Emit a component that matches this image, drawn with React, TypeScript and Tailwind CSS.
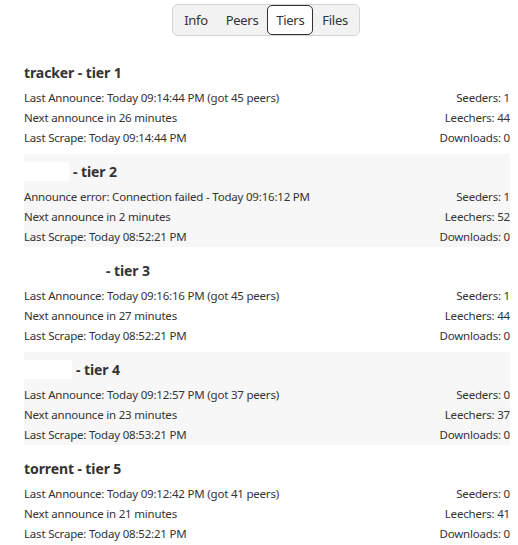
import React from "react";

type Tier = {
    name: string;
    redact?: number;
    shaded?: boolean;
    announce: string;
    next: string;
    scrape: string;
    seeders: number;
    leechers: number;
    downloads: number;
};

const TIERS: Tier[] = [
    { name: "tracker - tier 1", announce: "Last Announce: Today 09:14:44 PM (got 45 peers)", next: "Next announce in 26 minutes", scrape: "Last Scrape: Today 09:14:44 PM", seeders: 1, leechers: 44, downloads: 0 },
    { name: "- tier 2", redact: 45, shaded: true, announce: "Announce error: Connection failed - Today 09:16:12 PM", next: "Next announce in 2 minutes", scrape: "Last Scrape: Today 08:52:21 PM", seeders: 1, leechers: 52, downloads: 0 },
    { name: "- tier 3", redact: 78, announce: "Last Announce: Today 09:16:16 PM (got 45 peers)", next: "Next announce in 27 minutes", scrape: "Last Scrape: Today 08:52:21 PM", seeders: 1, leechers: 44, downloads: 0 },
    { name: "- tier 4", redact: 48, shaded: true, announce: "Last Announce: Today 09:12:57 PM (got 37 peers)", next: "Next announce in 23 minutes", scrape: "Last Scrape: Today 08:53:21 PM", seeders: 0, leechers: 37, downloads: 0 },
    { name: "torrent - tier 5", announce: "Last Announce: Today 09:12:42 PM (got 41 peers)", next: "Next announce in 21 minutes", scrape: "Last Scrape: Today 08:52:21 PM", seeders: 0, leechers: 41, downloads: 0 },
];

const TABS = ["Info", "Peers", "Tiers", "Files"];

export default function App() {
    return (
        <div className="w-[518px] h-[545px] bg-white overflow-hidden text-[#333] font-['Segoe_UI','Noto_Sans',sans-serif]">
            <div className="flex justify-center pt-[4px] pl-[14px]">
                <div className="flex items-center h-[32px] px-[2px] rounded-[6px] border border-[#d4d4d4] bg-[#f2f2f2] text-[13px] tracking-[-0.3px]">
                    {TABS.map((t) => (
                        <div
                            key={t}
                            className={`h-[30px] flex items-center pt-[1px] px-[8px] rounded-[5px] border ${t === "Tiers" ? "border-[#333] bg-white" : "border-transparent"}`}
                        >
                            {t}
                        </div>
                    ))}
                </div>
            </div>

            <div className="pl-6 pr-2 mt-[19px] flex flex-col gap-[6px]">
                {TIERS.map((tier) => (
                    <TierBlock key={tier.name} tier={tier} />
                ))}
            </div>
        </div>
    );
}

const TierBlock: React.FC<{ tier: Tier }> = ({ tier }) => (
    <div className={`h-[93px] pt-[7px] text-[11.5px] tracking-[-0.2px] ${tier.shaded ? "bg-[#f7f7f7]" : ""}`}>
        <div className="flex items-center h-[20px] text-[14px] font-bold tracking-[-0.1px]">
            {tier.redact ? (
                <span className="h-[19px] bg-white mr-[4px]" style={{ width: tier.redact }} />
            ) : null}
            <span>{tier.name}</span>
        </div>
        <div className="mt-[6px] flex flex-col leading-[20px]">
            <Row left={tier.announce} right={`Seeders: ${tier.seeders}`} />
            <Row left={tier.next} right={`Leechers: ${tier.leechers}`} />
            <Row left={tier.scrape} right={`Downloads: ${tier.downloads}`} />
        </div>
    </div>
);

const Row: React.FC<{ left: string; right: string }> = ({ left, right }) => (
    <div className="flex justify-between h-[20px]">
        <span>{left}</span>
        <span>{right}</span>
    </div>
);
